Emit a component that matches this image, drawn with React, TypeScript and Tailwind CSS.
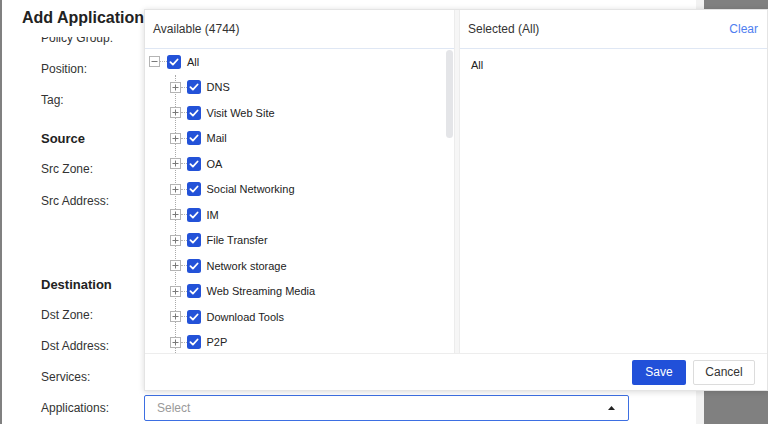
const groups = [
  "DNS",
  "Visit Web Site",
  "Mail",
  "OA",
  "Social Networking",
  "IM",
  "File Transfer",
  "Network storage",
  "Web Streaming Media",
  "Download Tools",
  "P2P",
];

function TreeBox({ open }: { open?: boolean }) {
  return (
    <svg width="11" height="11" viewBox="0 0 11 11" className="relative shrink-0 bg-white">
      <rect x="0.5" y="0.5" width="10" height="10" fill="#fff" stroke="#b4b4b4" />
      <path d="M2.5 5.5h6" stroke="#7a7a7a" />
      {!open && <path d="M5.5 2.5v6" stroke="#7a7a7a" />}
    </svg>
  );
}

function Check() {
  return (
    <svg width="14" height="14" viewBox="0 0 14 14" className="shrink-0">
      <rect x="0" y="0" width="14" height="14" rx="2.5" fill="#2352d8" />
      <path d="M3.4 7.1 L5.9 9.6 L10.6 4.5" fill="none" stroke="#fff" strokeWidth="1.8" strokeLinecap="round" strokeLinejoin="round" />
    </svg>
  );
}

function Row({ label, h = "h-[31px]" }: { label: string; h?: string }) {
  return (
    <div className={`flex items-center ${h} text-[12px] text-[#333]`}>
      <span>{label}</span>
    </div>
  );
}

function Heading({ label, h = "h-[30px]" }: { label: string; h?: string }) {
  return (
    <div className={`flex items-center ${h} text-[13px] font-bold text-[#222]`}>
      <span>{label}</span>
    </div>
  );
}

export default function App() {
  return (
    <div className="relative flex h-[424px] w-[768px] overflow-hidden bg-[#808080] font-['Liberation_Sans',Arial,sans-serif]">
      {/* modal */}
      <div className="ml-[2px] flex h-full w-[702px] bg-white">
        <div className="flex flex-1 flex-col">
          <div className="relative z-10 h-[37px] shrink-0 bg-white pl-[20px] pt-[8px]">
            <h1 className="text-[16px] leading-[20px] font-bold text-[#222]">Add Application</h1>
          </div>
          <div className="flex-1 overflow-hidden">
            <div className="-mt-[14.5px] pl-[39px]">
              <Row label="Policy Group:" />
              <Row label="Position:" />
              <Row label="Tag:" />
              <div className="pt-[8px]">
                <Heading label="Source" />
              </div>
              <Row label="Src Zone:" h="h-[30px]" />
              <div className="h-[86.5px] pt-[8px] text-[12px] text-[#333]">Src Address:</div>
              <Heading label="Destination" />
              <Row label="Dst Zone:" h="h-[30px]" />
              <Row label="Dst Address:" />
              <Row label="Services:" />
              <div className="flex h-[32px] items-center text-[12px] text-[#333]">
                <span className="w-[103px] shrink-0">Applications:</span>
                <div className="flex h-[26px] w-[485px] items-center justify-between rounded-[2px] border border-[#3d6fe2] pl-[12px] pr-[13px]">
                  <span className="text-[12px] text-[#9a9a9a]">Select</span>
                  <svg width="7" height="4" viewBox="0 0 7 4">
                    <path d="M0 4 L3.5 0 L7 4 Z" fill="#222" />
                  </svg>
                </div>
              </div>
            </div>
          </div>
        </div>
        <div className="w-[8px] shrink-0 bg-[#f2f2f2]" />
      </div>

      {/* dropdown panel */}
      <div className="absolute left-[144px] top-[9px] z-20 flex h-[382px] w-[624px] flex-col border border-[#e4e4e4] bg-white shadow-[0_1px_6px_rgba(0,0,0,0.15)]">
        <div className="flex h-[343px] shrink-0">
          <div className="flex w-[309px] shrink-0 flex-col">
            <div className="flex h-[39px] shrink-0 items-center border-b border-[#dfe7f4] pl-[8px] text-[12px] text-[#333]">
              Available (4744)
            </div>
            <div className="flex flex-1 overflow-hidden">
              <div className="flex-1 text-[11px] text-[#222]">
                <div className="flex h-[25.5px] items-center pl-[4px]">
                  <TreeBox open />
                  <div className="w-[7px] border-t border-dotted border-[#b4b4b4]" />
                  <Check />
                  <span className="ml-[6px]">All</span>
                </div>
                <div className="ml-[30px] border-l border-dotted border-[#aaa]">
                  {groups.map((g) => (
                    <div key={g} className="-ml-[6.5px] flex h-[25.5px] items-center">
                      <TreeBox />
                      <div className="w-[6px] border-t border-dotted border-[#b4b4b4]" />
                      <Check />
                      <span className="ml-[6px]">{g}</span>
                    </div>
                  ))}
                </div>
              </div>
              <div className="w-[9px] shrink-0 pl-[1px] pt-[1px]">
                <div className="h-[88px] w-[7px] rounded-full bg-[#e4e5e8]" />
              </div>
            </div>
          </div>
          <div className="w-[6px] shrink-0 border-x border-[#ececec] bg-[#f6f6f6]" />
          <div className="flex flex-1 flex-col">
            <div className="flex h-[39px] shrink-0 items-center justify-between border-b border-[#dfe7f4] pl-[8px] pr-[9px] text-[12px]">
              <span className="text-[#333]">Selected (All)</span>
              <span className="text-[#4f7ef0]">Clear</span>
            </div>
            <div className="pl-[11px] pt-[8px] text-[11px] text-[#222]">All</div>
          </div>
        </div>
        <div className="flex flex-1 items-center justify-end gap-[7px] border-t border-[#ededed] pr-[12px]">
          <button className="h-[25px] w-[54px] rounded-[2px] bg-[#2150d9] text-[12px] text-white">Save</button>
          <button className="h-[25px] w-[62px] rounded-[2px] border border-[#dcdcdc] bg-white text-[12px] text-[#333]">
            Cancel
          </button>
        </div>
      </div>
    </div>
  );
}
